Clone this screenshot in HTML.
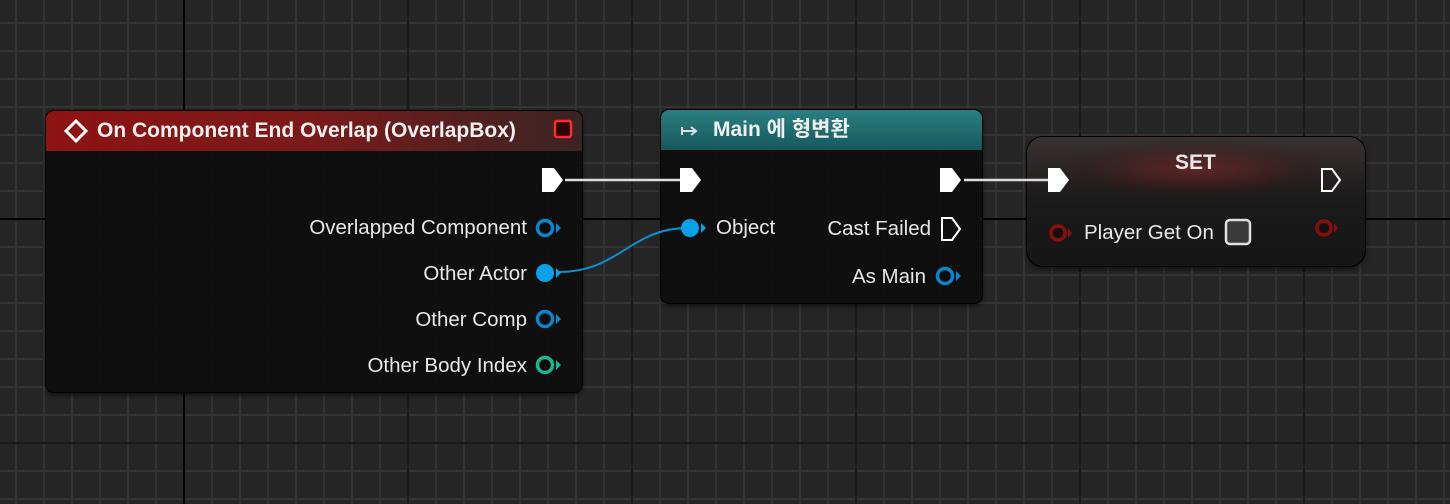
<!DOCTYPE html>
<html><head><meta charset="utf-8"><style>
html,body{margin:0;padding:0}
body{width:1450px;height:504px;overflow:hidden;position:relative;background-color:#262626;
background-image:
linear-gradient(to right,#000 0,#000 2px,transparent 2px),
linear-gradient(to bottom,#000 0,#000 2px,transparent 2px),
linear-gradient(to right,#1a1a1a 0,#1a1a1a 2px,transparent 2px),
linear-gradient(to bottom,#1a1a1a 0,#1a1a1a 2px,transparent 2px),
linear-gradient(to right,#343434 0,#343434 2px,transparent 2px),
linear-gradient(to bottom,#343434 0,#343434 2px,transparent 2px);
background-size:1450px 504px,1450px 504px,224px 224px,224px 224px,28px 28px,28px 28px;
background-position:183px 0,0 218px,183px 218px,183px 218px,183px 218px,183px 218px;
background-repeat:no-repeat,no-repeat,repeat,repeat,repeat,repeat;
font-family:"Liberation Sans","Noto Sans CJK KR",sans-serif;color:#e8e8e8}
.node{position:absolute;background:rgba(14,15,14,0.96);border-radius:8px;box-shadow:0 0 0 1px #000,0 3px 6px rgba(0,0,0,.6)}
.hdr{position:absolute;left:0;right:0;top:0;height:40px;border-radius:8px 8px 0 0;font-weight:bold;font-size:21px;line-height:40px;color:#f0f0f0}
.lbl{position:absolute;font-size:20.5px;white-space:nowrap}
.r{text-align:right}
svg{position:absolute;left:0;top:0}
</style></head><body>

<div class="node" style="left:46px;top:111px;width:536px;height:281px">
 <div class="hdr" style="background:linear-gradient(to right,#8e1313 0%,#7a1a1a 50%,#3a2424 100%);padding-left:51px">On Component End Overlap (OverlapBox)</div>
 <div class="lbl r" style="right:55px;top:105px">Overlapped Component</div>
 <div class="lbl r" style="right:55px;top:151px">Other Actor</div>
 <div class="lbl r" style="right:55px;top:197px">Other Comp</div>
 <div class="lbl r" style="right:55px;top:243px">Other Body Index</div>
</div>

<div class="node" style="left:661px;top:110px;width:321px;height:193px">
 <div class="hdr" style="background:linear-gradient(to bottom,#2b7f82,#15585c);padding-left:52px">Main 에 형변환</div>
 <div class="lbl" style="left:55px;top:106px">Object</div>
 <div class="lbl r" style="right:51px;top:107px">Cast Failed</div>
 <div class="lbl r" style="right:56px;top:155px">As Main</div>
</div>

<div class="node" style="left:1027px;top:137px;width:338px;height:129px;border-radius:16px;background:radial-gradient(ellipse 150px 32px at 50% 32px,rgba(130,35,35,.6),rgba(60,20,20,.25) 70%,transparent),linear-gradient(to bottom,#3a3232 0,#1c1b1b 60px,#151515 100%)">
 <div class="lbl" style="left:148px;top:14px;font-weight:bold;font-size:21px">SET</div>
 <div class="lbl" style="left:57px;top:84px">Player Get On</div>
</div>

<svg width="1450" height="504" viewBox="0 0 1450 504">
 <line x1="565" y1="180" x2="680" y2="180" stroke="#ddd" stroke-width="2.5"/>
 <line x1="964" y1="180" x2="1048" y2="180" stroke="#ddd" stroke-width="2.5"/>
 <path d="M558 272 C 620 272, 630 228, 688 228" stroke="#0a8fd0" stroke-width="2" fill="none"/>
 <path d="M76 121 L86 131 L76 141 L66 131 Z" fill="none" stroke="#fff" stroke-width="3"/>
 <rect x="555" y="121" width="16" height="16" rx="2" fill="#2a0505" stroke="#ff2a2a" stroke-width="2.5"/>
 <path d="M542 168 h12 l9 12 l-9 12 h-12 z" fill="#fff"/>
 <path d="M680 168 h12 l9 12 l-9 12 h-12 z" fill="#fff"/>
 <path d="M940 168 h12 l9 12 l-9 12 h-12 z" fill="#fff"/>
 <path d="M1048 168 h12 l9 12 l-9 12 h-12 z" fill="#fff"/>
 <path d="M1322 169 h10 l8 11 l-8 11 h-10 z" fill="none" stroke="#fff" stroke-width="2"/>
 <path d="M942 218 h10 l8 11 l-8 11 h-10 z" fill="none" stroke="#fff" stroke-width="2"/>
 <g stroke-width="3.5">
 <circle cx="545" cy="228" r="7.5" fill="#0c0c0c" stroke="#0a86d0"/><path d="M556 223 l5 5 l-5 5z" fill="#0a86d0"/>
 <circle cx="545" cy="273" r="9" fill="#0aa0ea" stroke="none"/><path d="M556 268 l5 5 l-5 5z" fill="#0aa0ea"/>
 <circle cx="545" cy="319" r="7.5" fill="#0c0c0c" stroke="#0a86d0"/><path d="M556 314 l5 5 l-5 5z" fill="#0a86d0"/>
 <circle cx="545" cy="365" r="7.5" fill="#0c0c0c" stroke="#18b890"/><path d="M556 360 l5 5 l-5 5z" fill="#18b890"/>
 <circle cx="690" cy="228" r="9" fill="#0aa0ea" stroke="none"/><path d="M701 223 l5 5 l-5 5z" fill="#0aa0ea"/>
 <circle cx="945" cy="276" r="7.5" fill="#0c0c0c" stroke="#0a86d0"/><path d="M956 271 l5 5 l-5 5z" fill="#0a86d0"/>
 <circle cx="1058" cy="233" r="7" fill="#111" stroke="#8a0e0e"/><path d="M1068 228 l4 5 l-4 5z" fill="#8a0e0e"/>
 <circle cx="1324" cy="228" r="7" fill="#111" stroke="#8a0e0e"/><path d="M1334 223 l4 5 l-4 5z" fill="#8a0e0e"/>
 </g>
 <rect x="1226" y="220" width="24" height="24" rx="4" fill="#3a3a3a" stroke="#e0e0e0" stroke-width="2.5"/>
 <path d="M682 131 h14 M691 127 l5 4 l-5 4 M682 127 v8" stroke="#ddd" stroke-width="2" fill="none"/>
</svg>
</body></html>
